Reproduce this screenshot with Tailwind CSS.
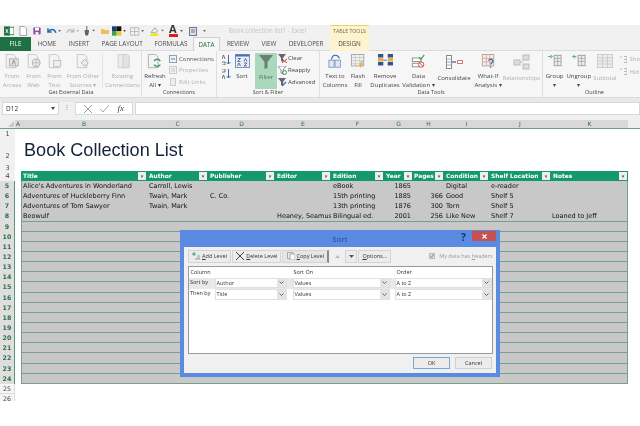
<!DOCTYPE html>
<html><head><meta charset="utf-8"><script src="https://cdn.jsdelivr.net/npm/@tailwindcss/browser@4"></script></head>
<body class="m-0 bg-white">
<div class="relative w-[640px] h-[426px] overflow-hidden bg-white font-['Open_Sans',sans-serif] text-[#444] blur-[0.25px]">
<div class="h-[25px]"></div>
<!-- QAT -->
<div class="h-[12px] bg-[#f1f1f1] flex items-center relative">
 <div class="flex items-center pl-[4px]">
  <svg width="10" height="10" viewBox="0 0 12 11"><rect x="4" y="1" width="8" height="9" fill="#fff" stroke="#1e7145"/><rect x="0" y="0" width="7" height="11" fill="#1e7145"/><path d="M2 3l3 5M5 3l-3 5" stroke="#fff"/></svg>
  <svg class="ml-[5px]" width="8" height="10" viewBox="0 0 9 11"><path d="M1 .5h5l2.500 2.500v7.500h-7.500z" fill="#fff" stroke="#999"/></svg>
  <svg class="ml-[6px]" width="8" height="8" viewBox="0 0 10 10"><rect x=".5" y=".5" width="9" height="9" rx="1" fill="#8a4a9e"/><rect x="2.500" y="1" width="5" height="3.500" fill="#fff"/><rect x="3" y="6.500" width="4" height="3" fill="#fff"/></svg>
  <svg class="ml-[6px]" width="14" height="10" viewBox="0 0 15 10"><path d="M1 2v4h4M1.500 6C3 2.500 8 2 9.500 7" fill="none" stroke="#2a6ab0" stroke-width="1.600"/><path d="M12 4h3l-1.500 2z" fill="#666"/></svg>
  <svg class="ml-[5px]" width="13" height="10" viewBox="0 0 15 10"><path d="M9 2v4H5M8.500 6C7 2.500 3 2 1 7" fill="none" stroke="#bbb" stroke-width="1.500"/><path d="M12 4h3l-1.500 2z" fill="#999"/></svg>
  <svg class="ml-[4px]" width="13" height="10" viewBox="0 0 14 11"><path d="M4 0v5M2 5h4l-1 5H3z" fill="#667" stroke="#556"/><path d="M10 4h3l-1.500 2z" fill="#666"/></svg>
  <svg class="ml-[5px]" width="8" height="8" viewBox="0 0 8 8"><path d="M0 2h3l1 1h4v4H0z" fill="#f2bd5c"/></svg>
  <svg class="ml-[3px]" width="14" height="10" viewBox="0 0 15 10"><rect width="5" height="5" fill="#1b3d7a"/><rect x="5" width="5" height="5" fill="#111"/><rect y="5" width="5" height="5" fill="#3fa34d"/><rect x="5" y="5" width="5" height="5" fill="#e7c52f"/><path d="M12 4h3l-1.500 2z" fill="#555"/></svg>
  <svg class="ml-[4px]" width="14" height="9" viewBox="0 0 15 9"><path d="M.5.500h9v8h-9zM5 .5v8M.5 4.500h9" fill="none" stroke="#bbb"/><path d="M12 3h3l-1.500 2z" fill="#666"/></svg>
  <svg class="ml-[6px]" width="14" height="10" viewBox="0 0 15 11"><path d="M1 7l4-5 3 3-2 3z" fill="#eee" stroke="#777" stroke-width=".7"/><rect x="0" y="8.500" width="9" height="2.500" fill="#f5e71a"/><path d="M12 4h3l-1.500 2z" fill="#666"/></svg>
  <div class="relative w-[14px] h-[11px] ml-[5px]"><span class="absolute left-0 -top-[3px] text-[11px] leading-[12px] font-bold text-[#333]">A</span><span class="absolute left-0 bottom-0 w-[9px] h-[2.500px] bg-[#d8201f]"></span><svg class="absolute right-0 top-[4px]" width="3" height="2" viewBox="0 0 3 2"><path d="M0 0h3l-1.500 2z" fill="#666"/></svg></div>
  <svg class="ml-[6px]" width="8" height="9" viewBox="0 0 8 9"><rect x=".5" y=".5" width="7" height="8" fill="#dde" stroke="#778"/><path d="M2 3h4M2 5h4" stroke="#778"/></svg>
  <svg class="ml-[6px]" width="3" height="3" viewBox="0 0 3 3"><path d="M0 0h3l-1.500 2z" fill="#666"/></svg>
 </div>
 <span class="absolute left-[229px] top-[1px] text-[6.200px] leading-[10px] text-[#c4c4c4] whitespace-nowrap">Book collection list1 - Excel</span>
 <div class="absolute left-[330px] top-0 w-[39px] h-[12px] bg-[#fdf3cf] border-t border-[#f2d25a] text-center text-[5.200px] leading-[11px] text-[#6f6f4a]">TABLE TOOLS</div>
</div>
<!-- Tabs -->
<div class="h-[13px] bg-[#f1f1f1] grid grid-cols-[31px_32px_32px_54px_44px_27px_36px_26px_48px_39px] text-[6.300px] leading-[13px] text-center text-[#4a4a4a]">
 <div class="bg-[#1e7145] text-white">FILE</div>
 <span>HOME</span><span>INSERT</span><span>PAGE LAYOUT</span><span>FORMULAS</span>
 <span class="relative z-10 h-[14px] bg-[#f6f6f6] text-[#1e7145] border border-b-0 border-[#d0d0d0]">DATA</span>
 <span>REVIEW</span><span>VIEW</span><span class="whitespace-nowrap">DEVELOPER</span>
 <span class="bg-[#fdf3cf]">DESIGN</span>
</div>
<!-- Ribbon -->
<div class="h-[47px] bg-[#f6f6f6] border-t border-[#dcdcdc] flex text-[6px] leading-[8.500px] text-center whitespace-nowrap">
 <div class="w-[142px] border-r border-[#dedede] flex flex-col text-[#adadad]">
  <div class="flex h-[38px] pt-[3px]">
   <div class="w-[24px] flex flex-col items-center"><svg width="16" height="17" viewBox="0 0 16 17"><path d="M1.500.5h8l3 3v12h-11z" fill="#f4f4f4" stroke="#c3c3c3"/><rect x="5" y="5.500" width="10" height="8" fill="#e4e4e4" stroke="#aaa"/><path d="M8 12l2-5 2 5" fill="none" stroke="#888"/></svg><span class="mt-[3px]">From<br>Access</span></div>
   <div class="w-[19px] flex flex-col items-center"><svg width="16" height="17" viewBox="0 0 16 17"><path d="M1.500.5h8l3 3v12h-11z" fill="#f4f4f4" stroke="#c3c3c3"/><circle cx="10.500" cy="10" r="4.500" fill="#eee" stroke="#aaa"/><path d="M6 10h9M10.500 5.500v9" stroke="#bbb"/></svg><span class="mt-[3px]">From<br>Web</span></div>
   <div class="w-[23px] flex flex-col items-center"><svg width="16" height="17" viewBox="0 0 16 17"><path d="M1.500.5h8l3 3v12h-11z" fill="#f4f4f4" stroke="#c3c3c3"/><rect x="6.500" y="7.500" width="8" height="7" fill="#eee" stroke="#bbb"/></svg><span class="mt-[3px]">From<br>Text</span></div>
   <div class="w-[34px] flex flex-col items-center"><svg width="16" height="17" viewBox="0 0 16 17"><path d="M1.500.5h8l3 3v12h-11z" fill="#f4f4f4" stroke="#c3c3c3"/><path d="M10 6l4 4-4 4-4-4z" fill="#eee" stroke="#aaa"/></svg><span class="mt-[3px]">From Other<br>Sources ▾</span></div>
   <div class="w-px h-[33px] bg-[#e4e4e4] ml-[2px]"></div>
   <div class="w-[37px] ml-[1px] flex flex-col items-center"><svg width="16" height="17" viewBox="0 0 16 17"><path d="M2.500.5h9v15h-9z" fill="#ececec" stroke="#ccc"/><path d="M8 .5h5l2 2v13H8z" fill="#e2e2e2" stroke="#ccc"/></svg><span class="mt-[3px]">Existing<br>Connections</span></div>
  </div>
  <div class="text-[5.500px] leading-[7px] text-[#444] pl-[1px]">Get External Data</div>
 </div>
 <div class="w-[75px] border-r border-[#dedede] flex flex-col">
  <div class="flex h-[38px] pt-[3px]">
   <div class="w-[26px] flex flex-col items-center text-[#444]"><svg width="18" height="17" viewBox="0 0 18 17"><path d="M1.500.5h8l3 3v12h-11z" fill="#f4f4f4" stroke="#a9a9a9"/><path d="M15 8a4 4 0 0 0-7 0M8 12a4 4 0 0 0 7 0" fill="none" stroke="#3d9a58" stroke-width="1.500"/></svg><span class="mt-[3px]">Refresh<br>All ▾</span></div>
   <div class="flex flex-col gap-[3px] items-start pl-[1px] pt-[.5px] text-left">
    <div class="flex items-center gap-[2px] text-[#555]"><svg width="8" height="8" viewBox="0 0 8 8"><rect x=".5" y=".5" width="7" height="7" fill="#eef" stroke="#8a9"/><path d="M2 4h4" stroke="#689"/></svg>Connections</div>
    <div class="flex items-center gap-[2px] text-[#b4b4b4]"><svg width="8" height="8" viewBox="0 0 8 8"><rect x=".5" y=".5" width="7" height="7" fill="#eee" stroke="#ccc"/><path d="M2 3h4M2 5h4" stroke="#ccc"/></svg>Properties</div>
    <div class="flex items-center gap-[2px] text-[#b4b4b4]"><svg width="8" height="8" viewBox="0 0 8 8"><rect x="1.500" y=".5" width="5" height="7" fill="#eee" stroke="#ccc"/></svg>Edit Links</div>
   </div>
  </div>
  <div class="text-[5.500px] leading-[7px] text-[#444]">Connections</div>
 </div>
 <div class="w-[103px] border-r border-[#dedede] flex flex-col">
  <div class="flex h-[38px] text-[#444]">
   <div class="w-[15px] ml-[2px] flex flex-col pt-[4px] gap-[4px] items-center">
    <svg width="9" height="10" viewBox="0 0 9 10"><path d="M6.500 0v9M4.500 7l2 2 2-2" fill="none" stroke="#2f6fb0"/><path d="M0 4l1.500-4 1.500 4M0 10h3v-3H0" fill="none" stroke="#555" stroke-width=".8"/></svg>
    <svg width="9" height="10" viewBox="0 0 9 10"><path d="M6.500 0v9M4.500 7l2 2 2-2" fill="none" stroke="#2f6fb0"/><path d="M0 0h3v3H0M0 10l1.500-4 1.500 4" fill="none" stroke="#555" stroke-width=".8"/></svg>
   </div>
   <div class="w-[18px] -ml-[1px] flex flex-col items-center pt-[3px]"><svg width="15" height="14" viewBox="0 0 15 14"><rect x=".5" y=".5" width="14" height="13" fill="#e8eefb" stroke="#7c94c4"/><rect x=".5" y=".5" width="14" height="2" fill="#4770b5"/><path d="M2.500 4.500h3l-3 3h3M10.500 4.500l-1.500 3M10.500 4.500l1.500 3M4 9l-1.500 3M4 9l1.500 3M9 9h3l-3 3h3" fill="none" stroke="#345" stroke-width=".7"/></svg><span class="mt-[3.500px]">Sort</span></div>
   <div class="w-[22px] ml-[4px] mt-[2px] h-[36px] bg-[#a9d8bc] flex flex-col items-center pt-[2px] text-[#4f6f5c]"><svg width="14" height="14" viewBox="0 0 14 14"><path d="M0 0h14L8.500 7v6l-3 1V7z" fill="#6f7f75"/></svg><span class="mt-[4px]">Filter</span></div>
   <div class="flex flex-col gap-[3px] pt-[3px] pl-[1px] text-left">
    <div class="flex items-center gap-[1px]"><svg width="9" height="9" viewBox="0 0 9 9"><path d="M0 0h8L5 4v4l-2-1V4z" fill="#667"/><path d="M4 5l5 4M9 5L4 9" stroke="#d63a2a"/></svg>Clear</div>
    <div class="flex items-center gap-[1px]"><svg width="9" height="9" viewBox="0 0 9 9"><path d="M0 0h8L5 4v4l-2-1V4z" fill="#fff" stroke="#667" stroke-width=".7"/><circle cx="6.500" cy="6.500" r="2" fill="none" stroke="#3d9a58"/></svg>Reapply</div>
    <div class="flex items-center gap-[1px]"><svg width="9" height="9" viewBox="0 0 9 9"><path d="M0 0h8L5 4v4l-2-1V4z" fill="#667"/><path d="M4 8l4-4" stroke="#2f6fb0" stroke-width="1.300"/></svg>Advanced</div>
   </div>
  </div>
  <div class="text-[5.500px] leading-[7px] text-[#444]">Sort &amp; Filter</div>
 </div>
 <div class="w-[223px] border-r border-[#dedede] flex flex-col">
  <div class="flex h-[38px] pt-[3px] text-[#444]">
   <div class="w-[30px] flex flex-col items-center"><svg width="17" height="17" viewBox="0 0 17 17"><rect x="1" y="7" width="6" height="8" fill="#dfe7f3" stroke="#7d97bd"/><rect x="8" y="7" width="6" height="8" fill="#dfe7f3" stroke="#7d97bd"/><path d="M4 6C5 0 11 0 13 5" fill="none" stroke="#2a6ab0" stroke-width="1.300"/></svg><span class="mt-[3px]">Text to<br>Columns</span></div>
   <div class="w-[18px] -ml-[1px] flex flex-col items-center"><svg width="16" height="17" viewBox="0 0 16 17"><rect x=".5" y=".5" width="14" height="13" fill="#f3f3f3" stroke="#a0a0a0"/><path d="M.5 4h14M.5 7.500h14M.5 11h14M5 .5v13M10 .5v13" stroke="#bbb" stroke-width=".7"/><path d="M12 8l-3 5h2l-1 4 4-6h-2l2-3z" fill="#e8b43a"/></svg><span class="mt-[3px]">Flash<br>Fill</span></div>
   <div class="w-[34px] ml-[1px] flex flex-col items-center"><svg width="17" height="17" viewBox="0 0 17 17"><rect x="0" y="0" width="6" height="4" fill="#33558e"/><rect x="0" y="4.500" width="6" height="4" fill="#e0b13f"/><rect x="0" y="9" width="6" height="4" fill="#33558e"/><rect x="11" y="0" width="6" height="4" fill="#33558e"/><rect x="11" y="4.500" width="6" height="4" fill="#e0b13f"/><rect x="11" y="9" width="6" height="4" fill="#33558e"/><path d="M6 7h4" stroke="#2a6ab0"/></svg><span class="mt-[3px]">Remove<br>Duplicates</span></div>
   <div class="w-[33px] flex flex-col items-center"><svg width="15" height="17" viewBox="0 0 15 17"><rect x=".5" y="4.500" width="10" height="4" fill="#fff" stroke="#888"/><rect x=".5" y="10.500" width="8" height="4" fill="#fff" stroke="#888"/><path d="M8 4l2 2 4-5" fill="none" stroke="#3d9a58" stroke-width="1.300"/><circle cx="10.500" cy="12" r="3" fill="#fff" stroke="#c8402f"/><path d="M8.500 10l4 4" stroke="#c8402f"/></svg><span class="mt-[3px]">Data<br>Validation ▾</span></div>
   <div class="w-[36px] ml-[1px] flex flex-col items-center"><svg width="17" height="17" viewBox="0 0 17 17"><rect x=".5" y="1.500" width="5" height="13" fill="#fff" stroke="#888"/><path d="M.5 5h5M.5 8h5M.5 11h5" stroke="#aaa"/><path d="M6 8h4" stroke="#2a6ab0" stroke-width="1.300"/><rect x="11.500" y="6.500" width="5" height="3" fill="#fff" stroke="#d2806a"/></svg><span class="mt-[3px]">Consolidate</span></div>
   <div class="w-[32px] flex flex-col items-center"><svg width="15" height="17" viewBox="0 0 15 17"><rect x=".5" y=".5" width="13" height="13" fill="#fbeee4" stroke="#b0a090"/><path d="M5 .5v13M9 .5v13M.5 5h13M.5 9h13" stroke="#caa"/><path d="M7.500 7.500c1-2 5-2 5 .5 0 2-2.500 2-2.500 4M10 14v1.500" fill="none" stroke="#2a5aa0" stroke-width="1.300"/></svg><span class="mt-[3px]">What-If<br>Analysis ▾</span></div>
   <div class="w-[35px] flex flex-col items-center text-[#b0b0b0]"><svg width="17" height="17" viewBox="0 0 17 17"><rect x="1" y="6" width="6" height="5" fill="#ddd" stroke="#bbb"/><rect x="10" y="1" width="6" height="5" fill="#ddd" stroke="#bbb"/><rect x="10" y="10" width="6" height="5" fill="#ddd" stroke="#bbb"/><path d="M7 8h3" stroke="#bbb"/></svg><span class="mt-[3px]">Relationships</span></div>
  </div>
  <div class="text-[5.500px] leading-[7px] text-[#444]">Data Tools</div>
 </div>
 <div class="flex-1 flex flex-col overflow-hidden">
  <div class="flex h-[38px] pt-[3px] text-[#444]">
   <div class="w-[24px] flex flex-col items-center"><svg width="16" height="15" viewBox="0 0 16 15" class="mb-[2px]"><rect x="7" y="1.500" width="8" height="12" fill="#eee" stroke="#999"/><path d="M7 5h8M7 8.500h8M11 1.500v12" stroke="#aaa"/><path d="M0 3h4M3 1l2 2-2 2" fill="none" stroke="#3d9a58"/></svg><span class="mt-[3px]">Group<br>▾</span></div>
   <div class="w-[26px] flex flex-col items-center"><svg width="16" height="15" viewBox="0 0 16 15" class="mb-[2px]"><rect x="7" y="1.500" width="8" height="12" fill="#eee" stroke="#999"/><path d="M7 5h8M7 8.500h8M11 1.500v12" stroke="#aaa"/><path d="M5 3H1M3 1L1 3l2 2" fill="none" stroke="#3d9a58"/></svg><span class="mt-[3px]">Ungroup<br>▾</span></div>
   <div class="w-[28px] flex flex-col items-center text-[#b0b0b0]"><svg width="16" height="14" viewBox="0 0 16 14" class="mb-[3px]"><rect x=".5" y=".5" width="15" height="13" fill="#eee" stroke="#ccc"/><path d="M.5 4h15M.5 7h15M.5 10h15M5.500 .5v13M10.500 .5v13" stroke="#ccc"/></svg><span class="mt-[3px]">Subtotal</span></div>
   <div class="flex flex-col gap-[4px] pl-[2px] pt-[1px] text-[#b0b0b0] text-left">
    <div class="flex items-center gap-[2px]"><svg width="7" height="7" viewBox="0 0 7 7"><path d="M0 1h2M4 .5h3v6H4M4 3.500h3" stroke="#bbb" fill="none"/></svg>Sho</div>
    <div class="flex items-center gap-[2px]"><svg width="7" height="7" viewBox="0 0 7 7"><path d="M0 1h2M4 .5h3v6H4M4 3.500h3" stroke="#bbb" fill="none"/></svg>Hid</div>
   </div>
  </div>
  <div class="text-[5.500px] leading-[7px] text-[#444] pl-[6px]">Outline</div>
 </div>
</div>
<div class="h-[5px] bg-[#e8e8e8] border-t border-[#dcdcdc]"></div>
<!-- Formula bar -->
<div class="h-[18px] bg-[#f0f0f0] flex items-start">
 <div class="w-[57px] h-[13px] ml-[2px] bg-white border border-[#d8d8d8] flex items-center justify-between px-[3px] text-[6.500px] text-[#333]">D12<svg width="4" height="3" viewBox="0 0 4 3"><path d="M0 0h4L2 3z" fill="#444"/></svg></div>
 <span class="w-[16px] text-center text-[7px] leading-[12px] text-[#777]">⁝</span>
 <div class="w-[58px] h-[13px] bg-white border border-[#d8d8d8] flex items-center justify-around px-[4px]">
  <svg width="8" height="8" viewBox="0 0 8 8"><path d="M0 0l8 8M8 0L0 8" stroke="#999"/></svg>
  <svg width="9" height="8" viewBox="0 0 9 8"><path d="M0 4l3 3 6-7" fill="none" stroke="#aaa"/></svg>
  <span class="font-['Liberation_Serif',serif] italic text-[9px] leading-[9px] text-[#444]">fx</span>
 </div>
 <div class="flex-1 h-[13px] ml-[2px] bg-white border border-[#d8d8d8]"></div>
</div>
<!-- Sheet -->
<div class="h-[281px] font-['DejaVu_Sans',sans-serif] text-[5.900px] text-[#111] overflow-hidden">
 <div class="h-[9px] grid grid-cols-[15px_6px_126px_61px_67px_56px_53px_29px_31px_45px_62px_77px_1fr] text-center text-[6px] leading-[8px] text-[#2c6e4d] bg-[#d8d8d8] border-b-[1.500px] border-[#6f9f86]">
  <div class="bg-[#eeeeee] relative"><svg class="absolute right-[1px] bottom-[1px]" width="6" height="6" viewBox="0 0 6 6"><path d="M6 0v6H0z" fill="#c8c8c8"/></svg></div><div class="text-[#555]">A</div><div>B</div><div>C</div><div>D</div><div>E</div><div>F</div><div>G</div><div>H</div><div>I</div><div>J</div><div>K</div><div class="bg-[#eeeeee]"></div>
 </div>
 <div class="grid grid-cols-[15px_1fr] h-[10px]"><div class="bg-[#f1f1f1] border-b border-[#ddd] text-center text-[6.500px] leading-[10px] text-[#444]">1</div><div></div></div>
 <div class="grid grid-cols-[15px_1fr] h-[26px]"><div class="bg-[#f1f1f1] border-b border-[#ddd] text-center text-[6.500px] leading-[34px] text-[#444]">2</div><div class="pl-[9px] font-['Liberation_Sans',sans-serif] text-[18.100px] leading-[22px] text-[#14233a]">Book Collection List</div></div>
 <div class="grid grid-cols-[15px_1fr] h-[6px]"><div class="bg-[#f1f1f1] border-b border-[#ddd] text-center text-[6.500px] leading-[6px] text-[#444]">3</div><div></div></div>
 <!-- header row -->
 <div class="grid grid-cols-[15px_6px_126px_61px_67px_56px_53px_29px_31px_45px_62px_77px_1fr] h-[10px] leading-[10px] text-white font-bold">
  <div class="bg-[#f1f1f1] text-center text-[#444] font-normal text-[6.500px]">4</div><div></div>
  <div class="bg-[#14996f] flex justify-between pl-[2px] pr-[1px] items-center">Title<span class="w-[8px] h-[8px] bg-[#eee] text-[#555] text-center text-[5px] leading-[8px]">▾</span></div>
  <div class="bg-[#14996f] flex justify-between pl-[2px] pr-[1px] items-center">Author<span class="w-[8px] h-[8px] bg-[#eee] text-[#555] text-center text-[5px] leading-[8px]">▾</span></div>
  <div class="bg-[#14996f] flex justify-between pl-[2px] pr-[1px] items-center">Publisher<span class="w-[8px] h-[8px] bg-[#eee] text-[#555] text-center text-[5px] leading-[8px]">▾</span></div>
  <div class="bg-[#14996f] flex justify-between pl-[2px] pr-[1px] items-center">Editor<span class="w-[8px] h-[8px] bg-[#eee] text-[#555] text-center text-[5px] leading-[8px]">▾</span></div>
  <div class="bg-[#14996f] flex justify-between pl-[2px] pr-[1px] items-center">Edition<span class="w-[8px] h-[8px] bg-[#eee] text-[#555] text-center text-[5px] leading-[8px]">▾</span></div>
  <div class="bg-[#14996f] flex justify-between pl-[2px] pr-[1px] items-center">Year<span class="w-[8px] h-[8px] bg-[#eee] text-[#555] text-center text-[5px] leading-[8px]">▾</span></div>
  <div class="bg-[#14996f] flex justify-between pl-[1px] pr-[1px] items-center">Pages<span class="w-[8px] h-[8px] bg-[#eee] text-[#555] text-center text-[5px] leading-[8px] shrink-0">▾</span></div>
  <div class="bg-[#14996f] flex justify-between pl-[2px] pr-[1px] items-center">Condition<span class="w-[8px] h-[8px] bg-[#eee] text-[#555] text-center text-[5px] leading-[8px] shrink-0">▾</span></div>
  <div class="bg-[#14996f] flex justify-between pl-[2px] pr-[1px] items-center whitespace-nowrap">Shelf Location<span class="w-[8px] h-[8px] bg-[#eee] text-[#555] text-center text-[5px] leading-[8px] shrink-0">▾</span></div>
  <div class="bg-[#14996f] flex justify-between pl-[2px] pr-[1px] items-center">Notes<span class="w-[8px] h-[8px] bg-[#eee] text-[#555] text-center text-[5px] leading-[8px]">▾</span></div>
  <div></div>
 </div>
 <!-- body rows -->
 <div class="grid grid-cols-[15px_1fr] auto-rows-[10.150px] font-normal text-[6.500px]">
  <div class="bg-[#dedede] border-r-[1.500px] border-[#5f9478] text-center font-bold text-[#2c6e4d] text-[6.300px] leading-[10px]">5</div>
  <div class="grid grid-cols-[6px_126px_61px_67px_56px_53px_29px_31px_45px_62px_77px_12px] leading-[10px] whitespace-nowrap"><div></div><div class="bg-[#c8c8c8] border-l-[1.500px] border-b border-[#76a08b] pl-[1px]">Alice's Adventures in Wonderland</div><div class="bg-[#c8c8c8] border-b border-[#76a08b] pl-[2px]">Carroll, Lewis</div><div class="bg-[#c8c8c8] border-b border-[#76a08b] pl-[2px]"></div><div class="bg-[#c8c8c8] border-b border-[#76a08b] pl-[2px]"></div><div class="bg-[#c8c8c8] border-b border-[#76a08b] pl-[2px]">eBook</div><div class="bg-[#c8c8c8] border-b border-[#76a08b] pr-[2px] text-right">1865</div><div class="bg-[#c8c8c8] border-b border-[#76a08b] pr-[1px] text-right"></div><div class="bg-[#c8c8c8] border-b border-[#76a08b] pl-[2px]">Digital</div><div class="bg-[#c8c8c8] border-b border-[#76a08b] pl-[2px]">e-reader</div><div class="bg-[#c8c8c8] border-b border-r border-[#76a08b] pl-[1px]"></div><div></div></div>
  <div class="bg-[#dedede] border-r-[1.500px] border-[#5f9478] text-center font-bold text-[#2c6e4d] text-[6.300px] leading-[10px]">6</div>
  <div class="grid grid-cols-[6px_126px_61px_67px_56px_53px_29px_31px_45px_62px_77px_12px] leading-[10px] whitespace-nowrap"><div></div><div class="bg-[#c8c8c8] border-l-[1.500px] border-b border-[#76a08b] pl-[1px]">Adventures of Huckleberry Finn</div><div class="bg-[#c8c8c8] border-b border-[#76a08b] pl-[2px]">Twain, Mark</div><div class="bg-[#c8c8c8] border-b border-[#76a08b] pl-[2px]">C. Co.</div><div class="bg-[#c8c8c8] border-b border-[#76a08b] pl-[2px]"></div><div class="bg-[#c8c8c8] border-b border-[#76a08b] pl-[2px]">15th printing</div><div class="bg-[#c8c8c8] border-b border-[#76a08b] pr-[2px] text-right">1885</div><div class="bg-[#c8c8c8] border-b border-[#76a08b] pr-[1px] text-right">366</div><div class="bg-[#c8c8c8] border-b border-[#76a08b] pl-[2px]">Good</div><div class="bg-[#c8c8c8] border-b border-[#76a08b] pl-[2px]">Shelf 5</div><div class="bg-[#c8c8c8] border-b border-r border-[#76a08b] pl-[1px]"></div><div></div></div>
  <div class="bg-[#dedede] border-r-[1.500px] border-[#5f9478] text-center font-bold text-[#2c6e4d] text-[6.300px] leading-[10px]">7</div>
  <div class="grid grid-cols-[6px_126px_61px_67px_56px_53px_29px_31px_45px_62px_77px_12px] leading-[10px] whitespace-nowrap"><div></div><div class="bg-[#c8c8c8] border-l-[1.500px] border-b border-[#76a08b] pl-[1px]">Adventures of Tom Sawyer</div><div class="bg-[#c8c8c8] border-b border-[#76a08b] pl-[2px]">Twain, Mark</div><div class="bg-[#c8c8c8] border-b border-[#76a08b] pl-[2px]"></div><div class="bg-[#c8c8c8] border-b border-[#76a08b] pl-[2px]"></div><div class="bg-[#c8c8c8] border-b border-[#76a08b] pl-[2px]">13th printing</div><div class="bg-[#c8c8c8] border-b border-[#76a08b] pr-[2px] text-right">1876</div><div class="bg-[#c8c8c8] border-b border-[#76a08b] pr-[1px] text-right">300</div><div class="bg-[#c8c8c8] border-b border-[#76a08b] pl-[2px]">Torn</div><div class="bg-[#c8c8c8] border-b border-[#76a08b] pl-[2px]">Shelf 5</div><div class="bg-[#c8c8c8] border-b border-r border-[#76a08b] pl-[1px]"></div><div></div></div>
  <div class="bg-[#dedede] border-r-[1.500px] border-[#5f9478] text-center font-bold text-[#2c6e4d] text-[6.300px] leading-[10px]">8</div>
  <div class="grid grid-cols-[6px_126px_61px_67px_56px_53px_29px_31px_45px_62px_77px_12px] leading-[10px] whitespace-nowrap"><div></div><div class="bg-[#c8c8c8] border-l-[1.500px] border-b border-[#76a08b] pl-[1px]">Beowulf</div><div class="bg-[#c8c8c8] border-b border-[#76a08b] pl-[2px]"></div><div class="bg-[#c8c8c8] border-b border-[#76a08b] pl-[2px]"></div><div class="bg-[#c8c8c8] border-b border-[#76a08b] pl-[2px]">Heaney, Seamus</div><div class="bg-[#c8c8c8] border-b border-[#76a08b] pl-[2px]">Bilingual ed.</div><div class="bg-[#c8c8c8] border-b border-[#76a08b] pr-[2px] text-right">2001</div><div class="bg-[#c8c8c8] border-b border-[#76a08b] pr-[1px] text-right">256</div><div class="bg-[#c8c8c8] border-b border-[#76a08b] pl-[2px]">Like New</div><div class="bg-[#c8c8c8] border-b border-[#76a08b] pl-[2px]">Shelf 7</div><div class="bg-[#c8c8c8] border-b border-r border-[#76a08b] pl-[1px]">Loaned to Jeff</div><div></div></div>
  <div class="bg-[#dedede] border-r-[1.500px] border-[#5f9478] text-center font-bold text-[#2c6e4d] text-[6.300px] leading-[10px]">9</div><div class="ml-[6px] mr-[12px] bg-[#c8c8c8] border-x-[1.500px] border-b border-[#76a08b]"></div>
  <div class="bg-[#dedede] border-r-[1.500px] border-[#5f9478] text-center font-bold text-[#2c6e4d] text-[6.300px] leading-[10px]">10</div><div class="ml-[6px] mr-[12px] bg-[#c8c8c8] border-x-[1.500px] border-b border-[#76a08b]"></div>
  <div class="bg-[#dedede] border-r-[1.500px] border-[#5f9478] text-center font-bold text-[#2c6e4d] text-[6.300px] leading-[10px]">11</div><div class="ml-[6px] mr-[12px] bg-[#c8c8c8] border-x-[1.500px] border-b border-[#76a08b]"></div>
  <div class="bg-[#dedede] border-r-[1.500px] border-[#5f9478] text-center font-bold text-[#2c6e4d] text-[6.300px] leading-[10px]">12</div><div class="ml-[6px] mr-[12px] bg-[#c8c8c8] border-x-[1.500px] border-b border-[#76a08b]"></div>
  <div class="bg-[#dedede] border-r-[1.500px] border-[#5f9478] text-center font-bold text-[#2c6e4d] text-[6.300px] leading-[10px]">13</div><div class="ml-[6px] mr-[12px] bg-[#c8c8c8] border-x-[1.500px] border-b border-[#76a08b]"></div>
  <div class="bg-[#dedede] border-r-[1.500px] border-[#5f9478] text-center font-bold text-[#2c6e4d] text-[6.300px] leading-[10px]">14</div><div class="ml-[6px] mr-[12px] bg-[#c8c8c8] border-x-[1.500px] border-b border-[#76a08b]"></div>
  <div class="bg-[#dedede] border-r-[1.500px] border-[#5f9478] text-center font-bold text-[#2c6e4d] text-[6.300px] leading-[10px]">15</div><div class="ml-[6px] mr-[12px] bg-[#c8c8c8] border-x-[1.500px] border-b border-[#76a08b]"></div>
  <div class="bg-[#dedede] border-r-[1.500px] border-[#5f9478] text-center font-bold text-[#2c6e4d] text-[6.300px] leading-[10px]">16</div><div class="ml-[6px] mr-[12px] bg-[#c8c8c8] border-x-[1.500px] border-b border-[#76a08b]"></div>
  <div class="bg-[#dedede] border-r-[1.500px] border-[#5f9478] text-center font-bold text-[#2c6e4d] text-[6.300px] leading-[10px]">17</div><div class="ml-[6px] mr-[12px] bg-[#c8c8c8] border-x-[1.500px] border-b border-[#76a08b]"></div>
  <div class="bg-[#dedede] border-r-[1.500px] border-[#5f9478] text-center font-bold text-[#2c6e4d] text-[6.300px] leading-[10px]">18</div><div class="ml-[6px] mr-[12px] bg-[#c8c8c8] border-x-[1.500px] border-b border-[#76a08b]"></div>
  <div class="bg-[#dedede] border-r-[1.500px] border-[#5f9478] text-center font-bold text-[#2c6e4d] text-[6.300px] leading-[10px]">19</div><div class="ml-[6px] mr-[12px] bg-[#c8c8c8] border-x-[1.500px] border-b border-[#76a08b]"></div>
  <div class="bg-[#dedede] border-r-[1.500px] border-[#5f9478] text-center font-bold text-[#2c6e4d] text-[6.300px] leading-[10px]">20</div><div class="ml-[6px] mr-[12px] bg-[#c8c8c8] border-x-[1.500px] border-b border-[#76a08b]"></div>
  <div class="bg-[#dedede] border-r-[1.500px] border-[#5f9478] text-center font-bold text-[#2c6e4d] text-[6.300px] leading-[10px]">21</div><div class="ml-[6px] mr-[12px] bg-[#c8c8c8] border-x-[1.500px] border-b border-[#76a08b]"></div>
  <div class="bg-[#dedede] border-r-[1.500px] border-[#5f9478] text-center font-bold text-[#2c6e4d] text-[6.300px] leading-[10px]">22</div><div class="ml-[6px] mr-[12px] bg-[#c8c8c8] border-x-[1.500px] border-b border-[#76a08b]"></div>
  <div class="bg-[#dedede] border-r-[1.500px] border-[#5f9478] text-center font-bold text-[#2c6e4d] text-[6.300px] leading-[10px]">23</div><div class="ml-[6px] mr-[12px] bg-[#c8c8c8] border-x-[1.500px] border-b border-[#76a08b]"></div>
  <div class="bg-[#dedede] border-r-[1.500px] border-[#5f9478] text-center font-bold text-[#2c6e4d] text-[6.300px] leading-[10px]">24</div><div class="ml-[6px] mr-[12px] bg-[#c8c8c8] border-x-[1.500px] border-b border-[#76a08b]"></div>
  <div class="bg-[#f6f6f6] border-r border-b border-[#ddd] text-center text-[#444] text-[6.300px] leading-[10px]">25</div><div></div>
  <div class="h-[10px] bg-[#f6f6f6] border-r border-[#ddd] text-center text-[#444] text-[6.300px] leading-[10px]">26</div><div></div>
 </div>
</div>
<!-- Sort dialog -->
<div class="absolute left-[180px] top-[230px] w-[320px] h-[147px] bg-[#5b8ae2] flex flex-col font-['Open_Sans',sans-serif] text-[#333] text-[5.500px]">
 <div class="h-[17px] relative text-center text-[8px] leading-[18px] text-[#2d4a7a]">Sort
  <span class="absolute left-[281px] -top-[1px] text-[10px] font-bold leading-[16px] text-[#1d2f55]">?</span>
  <div class="absolute left-[292px] top-[1px] w-[24px] h-[10px] bg-[#c75050] flex items-center justify-center"><svg width="5" height="5" viewBox="0 0 5 5"><path d="M.5.500l4 4M4.500 .5l-4 4" stroke="#fff" stroke-width="1.200"/></svg></div>
 </div>
 <div class="mx-[4px] h-[126px] bg-[#f0f0f0] flex flex-col px-[3.500px]">
  <div class="h-[18.500px] flex items-center whitespace-nowrap text-center">
   <div class="w-[44px] h-[12.500px] bg-[#ececec] border border-[#d4d4d4] flex items-center justify-center gap-[2px]"><svg width="8" height="8" viewBox="0 0 8 8"><path d="M2 0v4M0 2h4" stroke="#4a9a68"/><path d="M5 4h3M5 6h3M3 7h5" stroke="#8aa"/></svg><span><u>A</u>dd Level</span></div>
   <div class="w-[49px] h-[12.500px] ml-[1px] bg-[#ececec] border border-[#d4d4d4] flex items-center justify-center gap-[2px]"><svg width="8" height="8" viewBox="0 0 8 8"><path d="M0 0l8 8M8 0L0 8" stroke="#444"/></svg><span><u>D</u>elete Level</span></div>
   <div class="w-[47px] h-[12.500px] ml-[1px] bg-[#e6e6e6] border border-[#d4d4d4] border-r-[#888] border-r-2 flex items-center justify-center gap-[2px]"><svg width="8" height="8" viewBox="0 0 8 8"><rect x=".5" y=".5" width="5" height="6" fill="#eee" stroke="#aaa"/><rect x="3" y="2" width="5" height="6" fill="#fff" stroke="#aaa"/></svg><span><u>C</u>opy Level</span></div>
   <div class="w-[13px] h-[12.500px] ml-[2px] flex items-center justify-center"><svg width="5" height="3" viewBox="0 0 5 3"><path d="M0 3l2.500-3 2.500 3z" fill="#bbb"/></svg></div>
   <div class="w-[12px] h-[12.500px] ml-[1px] bg-[#ececec] border border-[#d4d4d4] flex items-center justify-center"><svg width="5" height="3" viewBox="0 0 5 3"><path d="M0 0l2.500 3L5 0z" fill="#555"/></svg></div>
   <div class="w-[33px] h-[12.500px] ml-[1px] bg-[#ececec] border border-[#d4d4d4] leading-[10px]"><u>O</u>ptions...</div>
   <div class="w-[6px] h-[6px] ml-[38px] bg-[#ddd] border border-[#bbb] flex items-center justify-center"><svg width="5" height="4" viewBox="0 0 5 4"><path d="M.5 2l1.500 1.500L4.500 0" fill="none" stroke="#666"/></svg></div>
   <span class="ml-[4px] text-[#999]">My data has <u>h</u>eaders</span>
  </div>
  <div class="h-[88.500px] bg-white border border-[#9a9a9a] flex flex-col">
   <div class="h-[11px] grid grid-cols-[103px_103px_1fr] leading-[11px] pl-[2px]"><span>Column</span><span>Sort On</span><span>Order</span></div>
   <div class="h-[11.500px] flex bg-[#e8e8e8]">
    <span class="w-[26px] pl-[1.500px] leading-[8px]">Sort by</span>
    <div class="w-[72px] h-[10.500px] bg-white border border-[#e0e0e0] flex justify-between items-center pl-[1px]">Author<span class="w-[9px] h-full bg-[#e4e4e4] flex items-center justify-center"><svg width="5" height="3" viewBox="0 0 5 3"><path d="M.5.500l2 2 2-2" fill="none" stroke="#666"/></svg></span></div>
    <div class="w-[97px] h-[10.500px] ml-[6px] bg-white border border-[#e0e0e0] flex justify-between items-center pl-[1px]">Values<span class="w-[9px] h-full bg-[#e4e4e4] flex items-center justify-center"><svg width="5" height="3" viewBox="0 0 5 3"><path d="M.5.500l2 2 2-2" fill="none" stroke="#666"/></svg></span></div>
    <div class="w-[97px] h-[10.500px] ml-[5px] bg-white border border-[#e0e0e0] flex justify-between items-center pl-[1px]">A to Z<span class="w-[9px] h-full bg-[#e4e4e4] flex items-center justify-center"><svg width="5" height="3" viewBox="0 0 5 3"><path d="M.5.500l2 2 2-2" fill="none" stroke="#666"/></svg></span></div>
   </div>
   <div class="h-[11.500px] flex">
    <span class="w-[26px] pl-[1.500px] leading-[8px]">Then by</span>
    <div class="w-[72px] h-[10.500px] bg-white border border-[#e0e0e0] flex justify-between items-center pl-[1px]">Title<span class="w-[9px] h-full bg-[#e4e4e4] flex items-center justify-center"><svg width="5" height="3" viewBox="0 0 5 3"><path d="M.5.500l2 2 2-2" fill="none" stroke="#666"/></svg></span></div>
    <div class="w-[97px] h-[10.500px] ml-[6px] bg-white border border-[#e0e0e0] flex justify-between items-center pl-[1px]">Values<span class="w-[9px] h-full bg-[#e4e4e4] flex items-center justify-center"><svg width="5" height="3" viewBox="0 0 5 3"><path d="M.5.500l2 2 2-2" fill="none" stroke="#666"/></svg></span></div>
    <div class="w-[97px] h-[10.500px] ml-[5px] bg-white border border-[#e0e0e0] flex justify-between items-center pl-[1px]">A to Z<span class="w-[9px] h-full bg-[#e4e4e4] flex items-center justify-center"><svg width="5" height="3" viewBox="0 0 5 3"><path d="M.5.500l2 2 2-2" fill="none" stroke="#666"/></svg></span></div>
   </div>
  </div>
  <div class="flex-1 flex justify-end items-start gap-[5px] pt-[2.500px] pr-[.5px]">
   <div class="w-[37px] h-[12px] bg-[#ececec] border border-[#7aa7d8] text-center leading-[10px]">OK</div>
   <div class="w-[37px] h-[12px] bg-[#ececec] border border-[#d0d0d0] text-center leading-[10px]">Cancel</div>
  </div>
 </div>
</div>
</div>
</body></html>
